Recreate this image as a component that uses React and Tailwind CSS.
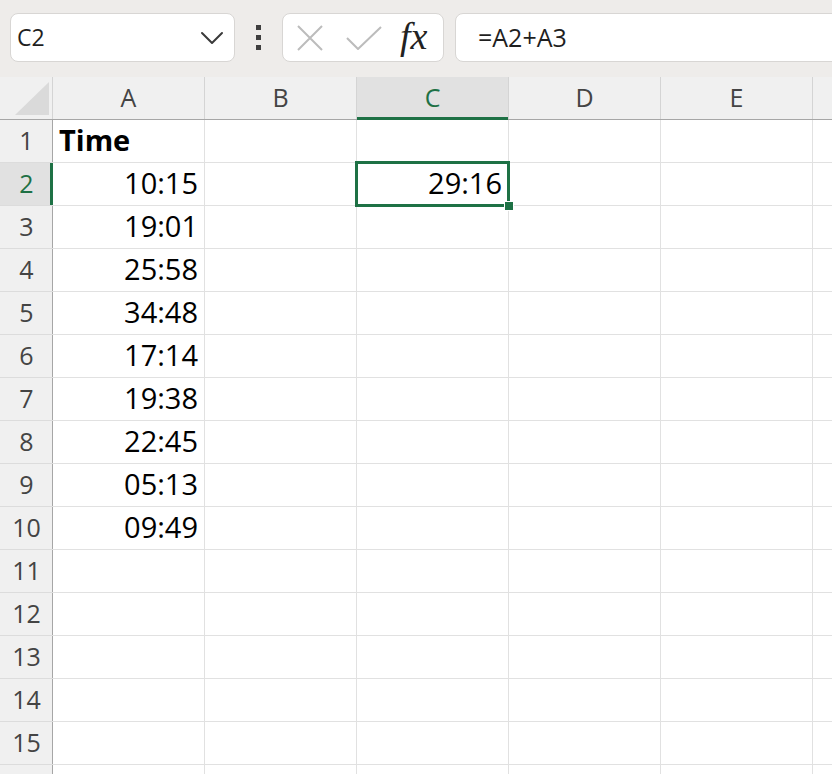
import React from 'react';

const COLS = ['A', 'B', 'C', 'D', 'E', 'F'];
const TIMES = ['10:15', '19:01', '25:58', '34:48', '17:14', '19:38', '22:45', '05:13', '09:49'];

function cellValue(r, c) {
  if (c === 0 && r === 1) return { text: 'Time', bold: true };
  if (c === 0 && r >= 2 && r <= 10) return { text: TIMES[r - 2], right: true };
  if (c === 2 && r === 2) return { text: '29:16', right: true };
  return null;
}

function Toolbar() {
  return (
    <div className="h-[77px] bg-[#eeecea] flex items-start pt-[13px] overflow-hidden">
      {/* Name box */}
      <div className="ml-[10px] w-[225px] h-[49px] shrink-0 rounded-lg border border-[#d8d6d4] bg-white flex items-center justify-between pl-[6px] pr-[10px]">
        <span className="text-[23px] text-[#1f1f1f]">C2</span>
        <svg width="24" height="14" viewBox="0 0 24 14" fill="none" stroke="#3a3a3a" strokeWidth="2" strokeLinecap="round" strokeLinejoin="round">
          <path d="M2 2 L12 12 L22 2" />
        </svg>
      </div>
      {/* Dots */}
      <div className="w-[47px] h-[49px] shrink-0 flex flex-col items-center justify-center gap-[5px]">
        <span className="w-[5px] h-[5px] bg-[#3f3f3f]" />
        <span className="w-[5px] h-[5px] bg-[#3f3f3f]" />
        <span className="w-[5px] h-[5px] bg-[#3f3f3f]" />
      </div>
      {/* Cancel / enter / fx */}
      <div className="w-[162px] h-[49px] shrink-0 rounded-lg border border-[#d8d6d4] bg-white flex items-center pl-[13px]">
        <svg width="28" height="26" viewBox="0 0 28 26" fill="none" stroke="#bcbcbc" strokeWidth="2">
          <path d="M2 1 L26 25 M26 1 L2 25" />
        </svg>
        <svg className="ml-[22px]" width="36" height="24" viewBox="0 0 36 24" fill="none" stroke="#bcbcbc" strokeWidth="2">
          <path d="M1 12 L12 23 L35 1" />
        </svg>
        <span className="ml-[18px] text-[38px] leading-none italic text-[#222] -mt-[4px]" style={{ fontFamily: '"Liberation Serif", "DejaVu Serif", serif' }}>fx</span>
      </div>
      {/* Formula */}
      <div className="ml-[11px] w-[420px] h-[49px] shrink-0 rounded-lg border border-[#d8d6d4] bg-white flex items-center pl-[22px]">
        <span className="text-[25px] text-[#1f1f1f]">=A2+A3</span>
      </div>
    </div>
  );
}

function HeaderRow() {
  return (
    <div className="flex h-[43px] bg-[#f0f0f0] border-b border-[#a6a6a6]">
      <div className="w-[53px] shrink-0 relative border-r border-[#d4d4d4]">
        <svg className="absolute left-0 top-0" width="52" height="42" viewBox="0 0 52 42">
          <polygon points="15,38 49,38 49,5" fill="#dadada" />
        </svg>
      </div>
      {COLS.map((c) => (
        <div
          key={c}
          className={
            'w-[152px] shrink-0 flex items-center justify-center text-[25px] border-r border-[#d4d4d4] relative ' +
            (c === 'C' ? 'bg-[#e1e1e1] text-[#1e7145]' : 'text-[#444]')
          }
        >
          {c}
          {c === 'C' && <span className="absolute left-0 right-0 -bottom-[1px] h-[3px] bg-[#1e7145]" />}
        </div>
      ))}
    </div>
  );
}

function Row({ r }) {
  const selRow = r === 2;
  return (
    <div className={'flex h-[43px] relative ' + (selRow ? 'z-10' : '')}>
      <div
        className={
          'w-[53px] shrink-0 flex items-center justify-center text-[25px] border-b border-[#dcdcdc] relative ' +
          (selRow ? 'bg-[#e1e1e1] text-[#1e7145]' : 'bg-[#f0f0f0] text-[#444]')
        }
      >
        {r}
        <span className={'absolute top-0 bottom-0 right-0 ' + (selRow ? 'w-[3px] bg-[#1e7145]' : 'w-[1px] bg-[#a6a6a6]')} />
      </div>
      {COLS.map((c, ci) => {
        const v = cellValue(r, ci);
        const sel = r === 2 && ci === 2;
        return (
          <div
            key={c}
            className={
              'w-[152px] shrink-0 border-r border-b border-[#e1e1e1] flex items-end pb-[8px] px-[6px] text-[29px] text-black relative ' +
              (v && v.right ? 'justify-end' : 'justify-start') +
              (v && v.bold ? ' font-bold' : '') +
              (sel ? ' z-10' : '')
            }
          >
            {v ? <span className="leading-none">{v.text}</span> : null}
            {sel && (
              <>
                <span className="absolute -left-[2px] -top-[2px] -right-[2px] -bottom-[2px] border-[3px] border-[#1e7145] pointer-events-none" />
                <span className="absolute -right-[5px] -bottom-[5px] w-[8px] h-[8px] bg-[#1e7145] ring-1 ring-white" />
              </>
            )}
          </div>
        );
      })}
    </div>
  );
}

export default function App() {
  const rows = Array.from({ length: 16 }, (_, i) => i + 1);
  return (
    <div className="w-[832px] h-[774px] overflow-hidden bg-white" style={{ fontFamily: '"Open Sans", "Noto Sans", sans-serif' }}>
      <Toolbar />
      <HeaderRow />
      {rows.map((r) => (
        <Row key={r} r={r} />
      ))}
    </div>
  );
}
